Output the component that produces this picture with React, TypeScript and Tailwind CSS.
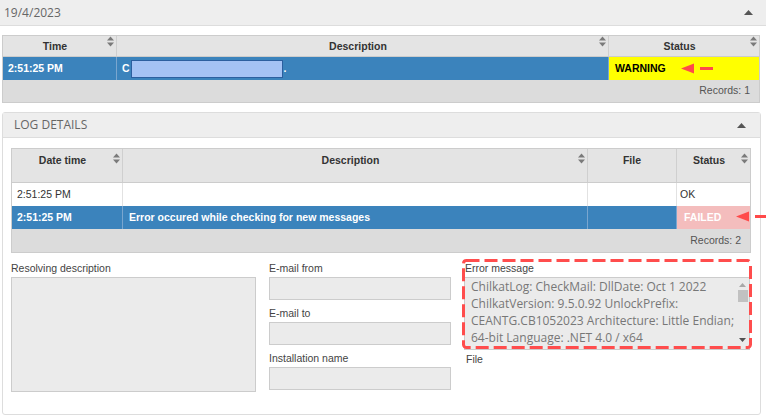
import React from "react";

const SANS = "font-['Liberation_Sans',Arial,sans-serif]";
const TITLE = "font-['Open_Sans','Noto_Sans',sans-serif]";

function SortIcon() {
  return (
    <svg width="7" height="11" viewBox="0 0 7 11" className="mr-[2px] shrink-0">
      <path d="M3.5 0.5L7 4.5H0z M3.5 10.5L0 6.5h7z" fill="#7a7a7a" />
    </svg>
  );
}

function CollapseIcon() {
  return (
    <svg width="9" height="5" viewBox="0 0 9 5">
      <path d="M4.5 0L9 5H0z" fill="#555" />
    </svg>
  );
}

function HeadCell({ label, sort = true, className = "" }: { label: string; sort?: boolean; className?: string }) {
  return (
    <div className={`flex items-start border-r border-[#cfcfcf] last:border-r-0 ${className}`}>
      <span className="flex-1 text-center font-bold text-[#333]">{label}</span>
      {sort ? <SortIcon /> : null}
    </div>
  );
}

function Arrow() {
  return (
    <svg width="32" height="11" viewBox="0 0 32 11">
      <path d="M0 5.5L13 0.5V10.5z" fill="#ff4a4a" />
      <rect x="19" y="4" width="13" height="3" fill="#ff4a4a" />
    </svg>
  );
}

function TopGrid() {
  return (
    <div className={`w-[758px] border border-[#cccccc] text-[10.5px] ${SANS}`}>
      <div className="grid h-[21px] grid-cols-[114px_492px_1fr] border-b border-[#cccccc] bg-[#e4e4e4] leading-[20px]">
        <HeadCell label="Time" className="items-center" />
        <HeadCell label="Description" className="items-center" />
        <HeadCell label="Status" className="items-center" />
      </div>
      <div className="grid h-[23px] grid-cols-[114px_492px_1fr] bg-[#3b83bc] font-bold text-white">
        <div className="flex items-center border-r border-[#7aa6cf] pl-[5px]">2:51:25 PM</div>
        <div className="flex items-center border-r border-[#7aa6cf] pl-[5px]">
          C
          <span className="mx-[1px] h-[18px] w-[152px] border border-[#2c5f9f] bg-[#a4c2f4]" />.
        </div>
        <div className="relative flex items-center bg-[#ffff00] pl-[6px] text-black">
          WARNING
          <span className="absolute left-[72px] top-[6px] flex">
            <Arrow />
          </span>
        </div>
      </div>
      <div className="flex h-[22px] items-center justify-end bg-[#dcdcdc] pr-[9px] font-normal text-[#555]">Records: 1</div>
    </div>
  );
}

function DetailGrid() {
  return (
    <div className={`w-[740px] border border-[#cccccc] text-[10.5px] ${SANS}`}>
      <div className="grid h-[34px] grid-cols-[111px_465px_89px_1fr] border-b border-[#cccccc] bg-[#e4e4e4] leading-[14px]">
        <HeadCell label="Date time" className="pt-[4px]" />
        <HeadCell label="Description" className="pt-[4px]" />
        <HeadCell label="File" sort={false} className="pt-[4px]" />
        <HeadCell label="Status" className="pt-[4px]" />
      </div>
      <div className="grid h-[23px] grid-cols-[111px_465px_89px_1fr] bg-white text-[#333]">
        <div className="flex items-center border-r border-[#e2e2e2] pl-[5px]">2:51:25 PM</div>
        <div className="border-r border-[#e2e2e2]" />
        <div className="border-r border-[#e2e2e2]" />
        <div className="flex items-center pl-[3px]">OK</div>
      </div>
      <div className="grid h-[23px] grid-cols-[111px_465px_89px_1fr] bg-[#3b83bc] font-bold text-white">
        <div className="flex items-center border-r border-[#7aa6cf] pl-[5px]">2:51:25 PM</div>
        <div className="flex items-center border-r border-[#7aa6cf] pl-[6px]">Error occured while checking for new messages</div>
        <div className="border-r border-[#7aa6cf]" />
        <div className="relative flex items-center bg-[#f4bdbd] pl-[7px]">
          FAILED
          <span className="absolute left-[59px] top-[5px] flex">
            <Arrow />
          </span>
        </div>
      </div>
      <div className="flex h-[23px] items-center justify-end bg-[#dcdcdc] pr-[9px] text-[#555]">Records: 2</div>
    </div>
  );
}

const errorLines = [
  "ChilkatLog: CheckMail: DllDate: Oct 1 2022",
  "ChilkatVersion: 9.5.0.92 UnlockPrefix:",
  "CEANTG.CB1052023 Architecture: Little Endian;",
  "64-bit Language: .NET 4.0 / x64",
  "VerboseLogging: 0 Component successfully",
];

function Field({ label }: { label: string }) {
  return (
    <div className="flex flex-col">
      <span className="h-[16px] leading-[14px] text-[#444]">{label}</span>
      <div className="h-[23px] border border-[#cccccc] bg-[#ebebeb]" />
    </div>
  );
}

function DetailForm() {
  return (
    <div className={`relative flex gap-[13px] text-[10.5px] ${SANS}`}>
      <div className="flex w-[245px] flex-col">
        <span className="h-[16px] leading-[14px] text-[#444]">Resolving description</span>
        <div className="h-[115px] border border-[#cccccc] bg-[#ebebeb]" />
      </div>
      <div className="flex w-[182px] flex-col gap-[6px]">
        <Field label="E-mail from" />
        <Field label="E-mail to" />
        <Field label="Installation name" />
      </div>
      <div className="flex w-[286px] flex-col">
        <span className="h-[16px] pl-[1px] leading-[14px] text-[#444]">Error message</span>
        <div className="flex h-[73px] border border-[#cccccc] bg-[#ebebeb]">
          <div className={`flex-1 overflow-hidden pl-[6px] text-[12px] leading-[17px] text-[#777] ${TITLE}`}>
            {errorLines.map((l) => (
              <div key={l} className="whitespace-nowrap">
                {l}
              </div>
            ))}
          </div>
          <div className="flex w-[13px] flex-col items-center pt-[5px]">
            <svg width="7" height="4" viewBox="0 0 7 4">
              <path d="M3.5 0L7 4H0z" fill="#a8a8a8" />
            </svg>
            <div className="mt-[3px] h-[12px] w-[10px] bg-[#c1c1c1]" />
            <div className="flex-1" />
            <svg width="7" height="4" viewBox="0 0 7 4" className="mb-[7px]">
              <path d="M0 0H7L3.5 4z" fill="#505050" />
            </svg>
          </div>
        </div>
        <span className="mt-[2px] pl-[2px] leading-[14px] text-[#444]">File</span>
      </div>
      <svg width="290" height="90" viewBox="0 0 290 90" className="pointer-events-none absolute left-[451px] -top-[2px]">
        <rect x="1.5" y="1.5" width="287" height="87" rx="3" fill="none" stroke="#ff4d4d" strokeWidth="3" strokeDasharray="13 5" />
      </svg>
    </div>
  );
}

export default function App() {
  return (
    <div className="h-[419px] w-[766px] overflow-hidden bg-white">
      <div className={`flex h-[26px] items-center justify-between border-b border-[#dddddd] bg-[#eeeeee] pl-[4px] pr-[13px] text-[12px] text-[#666] ${TITLE}`}>
        <span>19/4/2023</span>
        <CollapseIcon />
      </div>
      <div className="pl-[2px] pt-[9px]">
        <TopGrid />
      </div>
      <div className="ml-[2px] mt-[9px] h-[303px] w-[759px] rounded-[3px] border border-[#dddddd]">
        <div className={`flex h-[25px] items-center justify-between border-b border-[#dddddd] bg-[#eeeeee] pl-[11px] pr-[14px] text-[12px] text-[#666] ${TITLE}`}>
          <span>LOG DETAILS</span>
          <CollapseIcon />
        </div>
        <div className="pl-[8px] pt-[10px]">
          <DetailGrid />
          <div className="pt-[8px]">
            <DetailForm />
          </div>
        </div>
      </div>
    </div>
  );
}
